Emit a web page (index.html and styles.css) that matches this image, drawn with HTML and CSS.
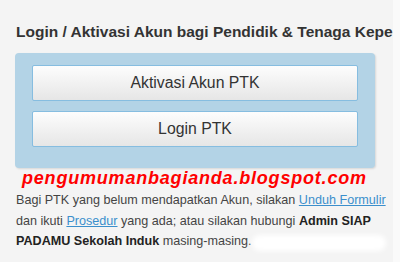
FILE: index.html
```html
<!DOCTYPE html>
<html lang="id">

<head>
  <meta charset="UTF-8">
  <meta name="viewport" content="width=device-width, initial-scale=1.0">
  <title>Login PTK</title>
  <link rel="stylesheet" href="styles.css">
</head>

<body>
  <div class="page">
    <h2 class="title">Login / Aktivasi Akun bagi Pendidik &amp; Tenaga Kependidikan</h2>
    <div class="panel">
      <button class="btn">Aktivasi Akun PTK</button>
      <button class="btn">Login PTK</button>
    </div>
    <div class="stamp">pengumumanbagianda.blogspot.com</div>
    <p class="info">
      Bagi PTK yang belum mendapatkan Akun, silakan <a href="#">Unduh Formulir</a>
      dan ikuti <a href="#">Prosedur</a> yang ada; atau silakan hubungi <b>Admin SIAP
      PADAMU Sekolah Induk</b> masing-masing.<span class="smudge"></span>
    </p>
  </div>
</body>

</html>
```

FILE: styles.css
```css
* {
  box-sizing: border-box;
}

body {
  margin: 0;
  background: #fafafa;
  font-family: "Liberation Sans", Arial, sans-serif;
  color: #333;
  overflow: hidden;
}

.page {
  width: 393px;
  height: 262px;
  padding: 22px 0 0 15px;
  background: #f4f4f4;
  overflow: hidden;
}

.title {
  margin: 0 0 11px 1px;
  font-size: 15.5px;
  line-height: 20px;
  font-weight: bold;
  color: #333;
  white-space: nowrap;
}

.panel {
  width: 360px;
  padding: 12px 17px 21px;
  background: #b3d3e6;
  border-radius: 4px;
  box-shadow: 1px 1px 2px rgba(0, 0, 0, 0.12);
  display: flex;
  flex-direction: column;
  gap: 10px;
}

.btn {
  height: 36px;
  font-family: inherit;
  font-size: 15.8px;
  color: #333;
  background: linear-gradient(#fdfdfd, #e6e6e6);
  border: 1px solid #86bde0;
  border-radius: 2px;
  cursor: pointer;
}

.btn:focus {
  outline: none;
}

.stamp {
  margin: 0 0 0 7px;
  font-size: 18px;
  line-height: 20px;
  font-weight: bold;
  font-style: italic;
  letter-spacing: 0.8px;
  color: #f00;
}

.info {
  position: relative;
  width: 372px;
  margin: 2px 0 0 1px;
  font-size: 12.6px;
  line-height: 20.5px;
  color: #444;
}

.info a {
  color: #3b8fcc;
}

.info b {
  color: #222;
}

.smudge {
  position: absolute;
  left: 236px;
  top: 45px;
  width: 134px;
  height: 16px;
  background: #fff;
  border-radius: 8px;
  filter: blur(2.5px);
}
```
